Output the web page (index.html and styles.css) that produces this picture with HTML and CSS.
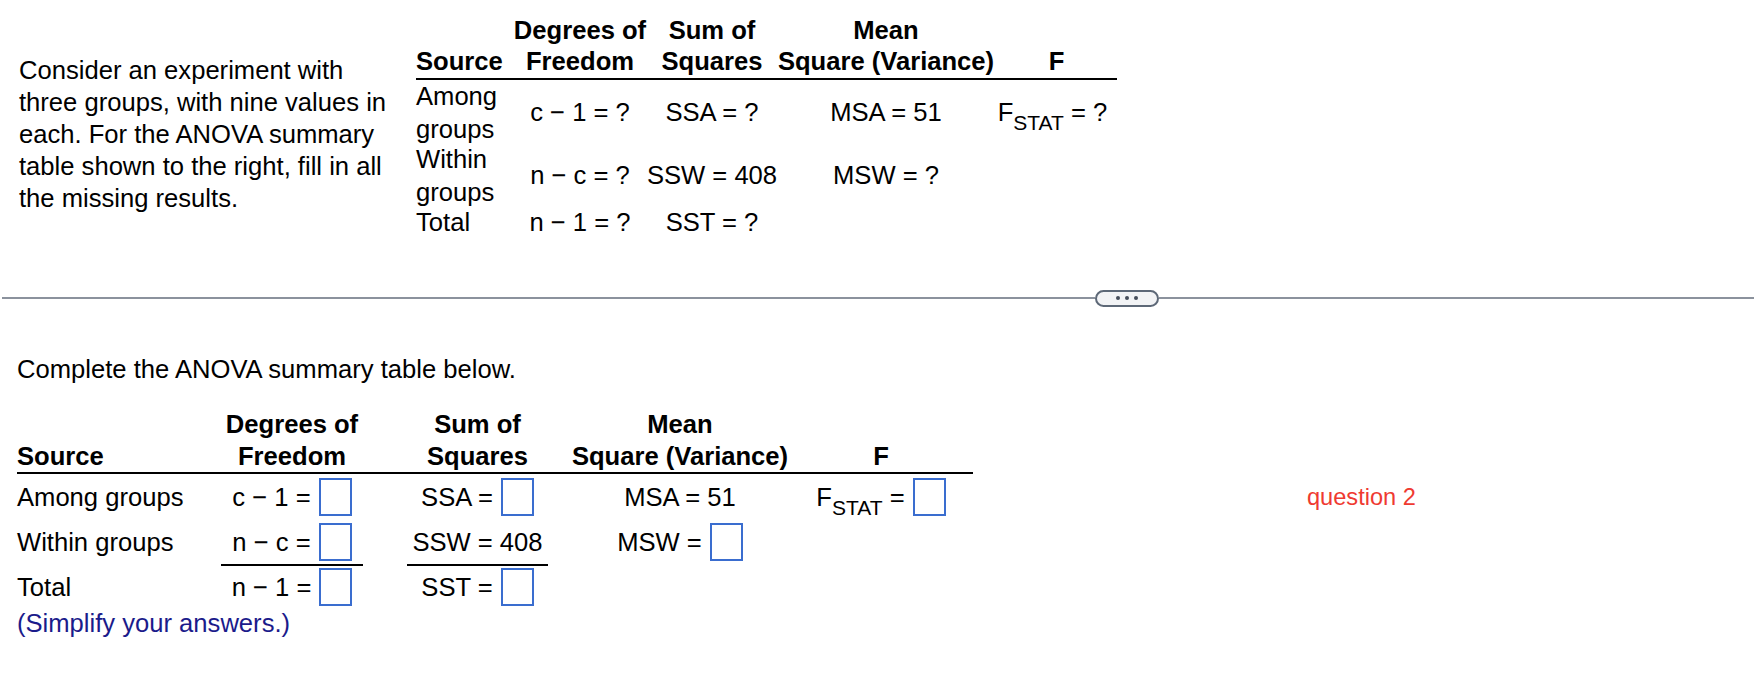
FILE: index.html
```
<!DOCTYPE html>
<html lang="en">
<head>
<meta charset="utf-8">
<title>ANOVA summary table</title>
<link rel="stylesheet" href="styles.css">
</head>
<body>
<div class="top">
  <p class="intro">Consider an experiment with three groups, with nine values in each. For the ANOVA summary table shown to the right, fill in all the missing results.</p>
  <div class="ttable">
    <div class="th th-src">Source</div>
    <div class="th">Degrees of<br>Freedom</div>
    <div class="th">Sum of<br>Squares</div>
    <div class="th">Mean<br>Square (Variance)</div>
    <div class="th">F</div>

    <div class="tc tc-src">Among<br>groups</div>
    <div class="tc">c − 1 = ?</div>
    <div class="tc">SSA = ?</div>
    <div class="tc">MSA = 51</div>
    <div class="tc tc-f"><span>F<span class="sub">STAT</span> = ?</span></div>

    <div class="tc tc-src r2">Within<br>groups</div>
    <div class="tc r2">n − c = ?</div>
    <div class="tc r2">SSW = 408</div>
    <div class="tc r2">MSW = ?</div>
    <div class="tc r2"></div>

    <div class="tc tc-src r3">Total</div>
    <div class="tc r3">n − 1 = ?</div>
    <div class="tc r3">SST = ?</div>
    <div class="tc r3"></div>
    <div class="tc r3"></div>
  </div>
</div>

<div class="divider">
  <div class="rule"></div>
  <div class="more"><span class="dot"></span><span class="dot"></span><span class="dot"></span></div>
  <div class="rule rule-end"></div>
</div>

<p class="lead">Complete the ANOVA summary table below.</p>

<div class="btable">
  <div class="bh bh-src">Source</div>
  <div class="bh">Degrees of<br>Freedom</div>
  <div class="bh">Sum of<br>Squares</div>
  <div class="bh">Mean<br>Square (Variance)</div>
  <div class="bh">F</div>
  <div class="blank"></div>
  <div class="blank"></div>

  <div class="bc bc-src">Among groups</div>
  <div class="bc"><span>c − 1 =</span><span class="box"></span></div>
  <div class="bc"><span>SSA =</span><span class="box"></span></div>
  <div class="bc"><span>MSA = 51</span></div>
  <div class="bc"><span>F<span class="sub">STAT</span> =</span><span class="box"></span></div>
  <div class="blank"></div>
  <div class="bc bc-q">question 2</div>

  <div class="bc bc-src">Within groups</div>
  <div class="bc bc-sum"><div class="sumwrap"><span>n − c =</span><span class="box"></span></div></div>
  <div class="bc bc-sum"><div class="sumwrap sumwrap-ss"><span>SSW = 408</span></div></div>
  <div class="bc"><span>MSW =</span><span class="box"></span></div>
  <div class="bc"></div>
  <div class="blank"></div>
  <div class="blank"></div>

  <div class="bc bc-src">Total</div>
  <div class="bc"><span>n − 1 =</span><span class="box"></span></div>
  <div class="bc"><span>SST =</span><span class="box"></span></div>
  <div class="bc"></div>
  <div class="bc"></div>
  <div class="blank"></div>
  <div class="blank"></div>
</div>

<p class="hint">(Simplify your answers.)</p>
</body>
</html>
```

FILE: styles.css
```
html, body {
  margin: 0;
  padding: 0;
  background: #ffffff;
}

body {
  font-family: "Liberation Sans", Arial, Helvetica, sans-serif;
  font-size: 25.6px;
  color: #000000;
}

p {
  margin: 0;
}

/* ---------- top section ---------- */
.top {
  display: flex;
  align-items: flex-start;
  gap: 17px;
  padding: 14.6px 0 0 19px;
}

.intro {
  width: 380px;
  margin-top: 39.4px;
  line-height: 32px;
}

.ttable {
  display: grid;
  grid-template-columns: 96px 136px 128px 220px 121px;
  line-height: 33px;
}

.th {
  display: flex;
  flex-direction: column;
  justify-content: flex-end;
  align-items: center;
  text-align: center;
  font-weight: bold;
  line-height: 31px;
  padding-bottom: 1px;
  border-bottom: 2px solid #000;
  white-space: nowrap;
}

.th-src {
  align-items: flex-start;
  text-align: left;
}

.tc {
  display: flex;
  align-items: center;
  justify-content: center;
  white-space: nowrap;
}

.tc-src {
  display: block;
}

.tc-f {
  padding-right: 8px;
}

.r2,
.r3 {
  margin-top: -3px;
}

.sub {
  font-size: 21px;
  vertical-align: -9px;
  line-height: 0;
}

/* ---------- divider ---------- */
.divider {
  display: flex;
  align-items: center;
  height: 17px;
  margin: 51px 0 0 2px;
}

.rule {
  flex: 1 1 auto;
  height: 2px;
  background: #8b929d;
}

.rule-end {
  flex: 0 0 595px;
}

.more {
  width: 64px;
  height: 17px;
  box-sizing: border-box;
  border: 2px solid #5d6877;
  border-radius: 9px;
  background: #f2f3f5;
  display: flex;
  justify-content: center;
  align-items: center;
  gap: 5px;
}

.dot {
  width: 4px;
  height: 4px;
  border-radius: 50%;
  background: #454d5a;
}

/* ---------- bottom section ---------- */
.lead {
  margin: 48px 0 0 17px;
}

.btable {
  display: grid;
  grid-template-columns: 183px 184px 187px 218px 184px 334px auto;
  margin: 24px 0 0 17px;
}

.bh {
  display: flex;
  flex-direction: column;
  justify-content: flex-end;
  align-items: center;
  text-align: center;
  font-weight: bold;
  line-height: 32px;
  border-bottom: 2px solid #000;
  white-space: nowrap;
}

.bh-src {
  align-items: flex-start;
}

.bc {
  height: 45px;
  box-sizing: border-box;
  display: flex;
  align-items: center;
  justify-content: center;
  gap: 8px;
  white-space: nowrap;
  padding-top: 2px;
}

.bc-src {
  justify-content: flex-start;
}

.bc-q {
  justify-content: flex-start;
  font-size: 23.6px;
  color: #ef3a31;
}

.bc-sum {
  align-items: flex-start;
  padding-top: 0;
}

.sumwrap {
  width: 142px;
  height: 47px;
  margin-bottom: -2px;
  box-sizing: border-box;
  border-bottom: 2px solid #000;
  display: flex;
  align-items: center;
  justify-content: center;
  gap: 8px;
  padding-top: 2px;
}

.sumwrap-ss {
  width: 141px;
}

.box {
  display: inline-block;
  width: 33px;
  height: 38px;
  box-sizing: border-box;
  border: 2px solid #3a6dcf;
  background: #fff;
}

.hint {
  margin-left: 17px;
  color: #1b1b8b;
}
```
